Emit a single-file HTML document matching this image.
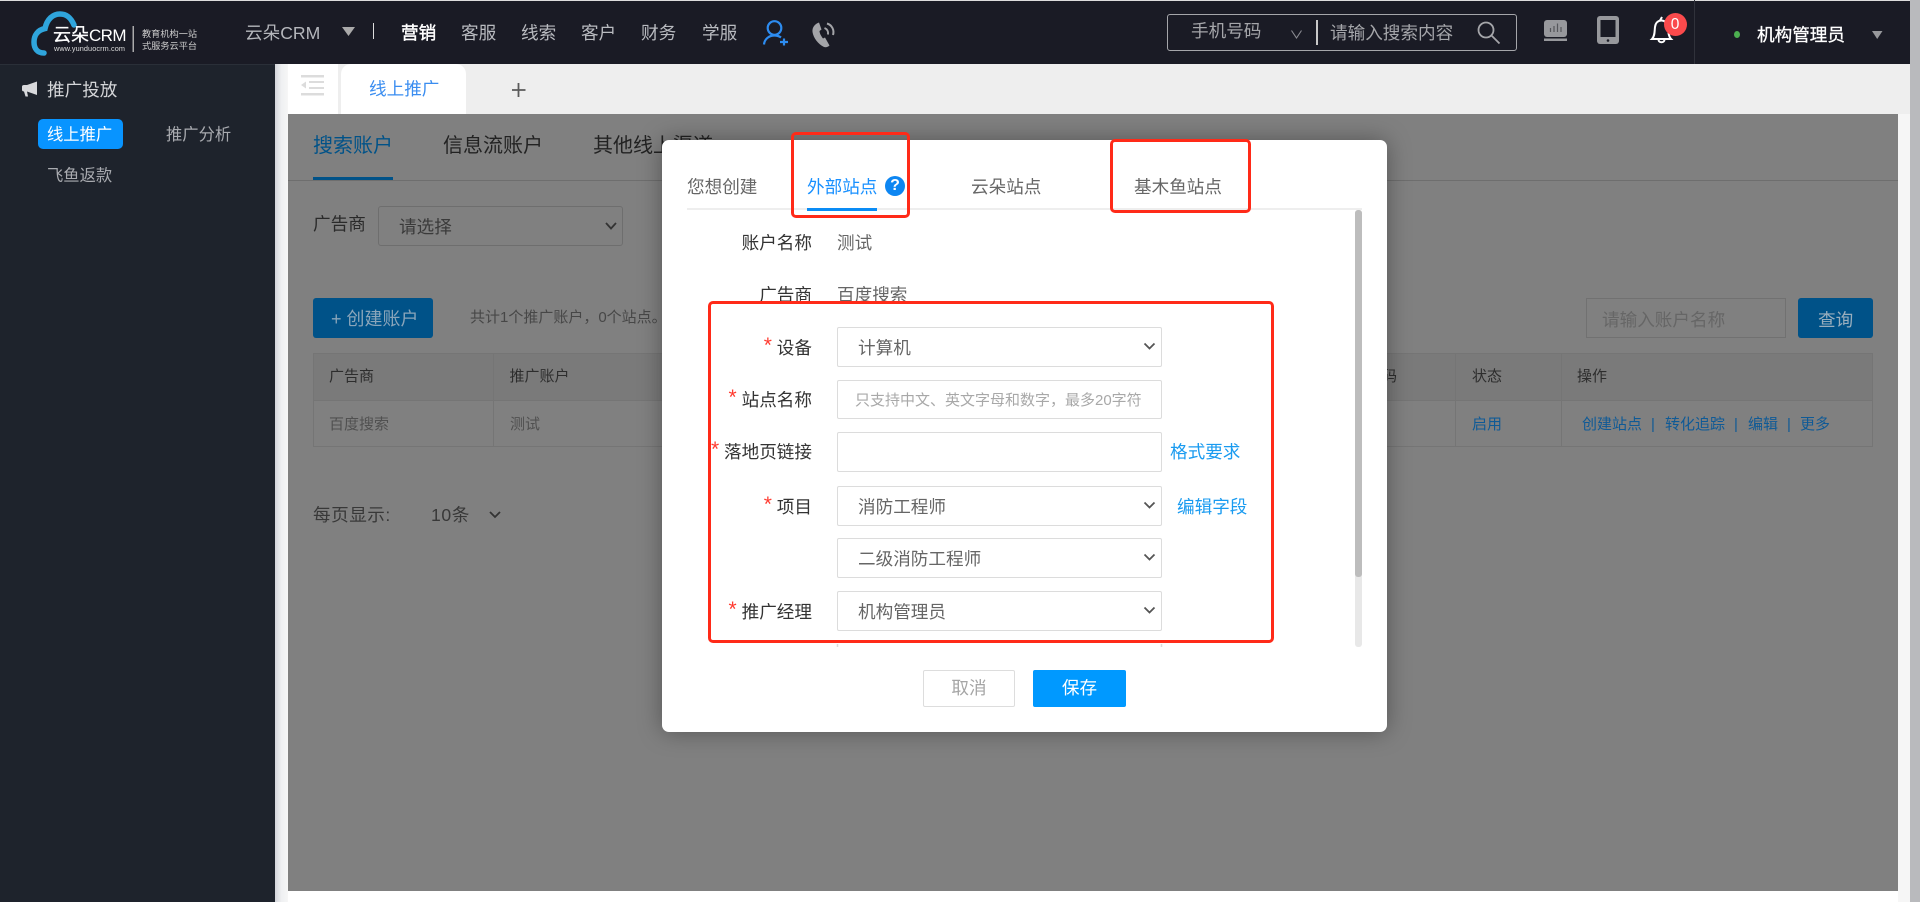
<!DOCTYPE html>
<html lang="zh-CN">
<head>
<meta charset="utf-8">
<title>云朵CRM 推广投放</title>
<style>
html,body{margin:0;padding:0;width:1920px;height:902px;overflow:hidden;background:#fff}
body{position:relative;font-family:"Liberation Sans","Noto Sans CJK SC",sans-serif}
.a{position:absolute;box-sizing:border-box}
.t{position:absolute;white-space:nowrap;line-height:24px;height:24px;font-size:17.6px}
.s{font-size:15px}
svg{position:absolute;overflow:visible}
.sel{position:absolute;box-sizing:border-box;left:837px;width:325px;border:1.5px solid #dcdcdc;border-radius:2px;background:#fff}
.star{color:#ff3b30;font-size:21px;position:relative;top:-2px;line-height:10px;vertical-align:baseline}
.lb{color:#333}
.sv{color:#666}
</style>
</head>
<body>
<!-- base -->
<div class="a" style="left:0;top:0;width:1910px;height:1.5px;background:#ddd"></div>
<div class="a" style="left:0;top:1px;width:1910px;height:63px;background:#1a1b25"></div>
<div class="a" style="left:1910px;top:0;width:10px;height:902px;background:#b9babd"></div>
<div class="a" style="left:0;top:64px;width:275px;height:838px;background:#1e232c;border-top:1px solid #2a2f38"></div>
<div class="a" style="left:275px;top:64px;width:13px;height:838px;background:linear-gradient(90deg,#d3d5da,#eff0f2 50%,#f6f6f6)"></div>
<div class="a" style="left:288px;top:64px;width:53px;height:50px;background:#fff"></div>
<div class="a" style="left:338px;top:64px;width:3px;height:50px;background:#eee"></div>
<div class="a" style="left:341px;top:64px;width:1569px;height:50px;background:#eee"></div>
<div class="a" style="left:1898px;top:114px;width:12px;height:788px;background:#f6f6f6"></div>
<div class="a" style="left:288px;top:114px;width:1610px;height:777px;background:#808080"></div>

<!-- logo -->
<svg style="left:0;top:0" width="240" height="64" viewBox="0 0 240 64">
<path d="M44 53 C37 53 34 48 34 42 C34 35 38 30 45 28.500 C47 19 53 14 60 14 C67 14 71 18 74 25" fill="none" stroke="#2fa5dc" stroke-width="5.500" stroke-linecap="round"/>
<rect x="132.500" y="26" width="1.500" height="26" fill="#aaa"/>
</svg>
<div class="t" style="left:53px;top:23px;color:#fff;font-size:18px;-webkit-text-stroke:.3px #fff">云朵<span style="font-size:17px;letter-spacing:-.6px;-webkit-text-stroke:0">CRM</span></div>
<div class="t" style="left:54px;top:37px;color:#ddd;font-size:7.300px;letter-spacing:.1px">www.yunduocrm.com</div>
<div class="t" style="left:142px;top:22px;color:#ccc;font-size:9.200px">教育机构一站</div>
<div class="t" style="left:142px;top:34px;color:#ccc;font-size:9.200px">式服务云平台</div>

<!-- top nav -->
<div class="t" style="left:245px;top:21px;color:#b5b7bc">云朵CRM</div>
<svg style="left:342px;top:27px" width="14" height="10"><path d="M0 0H13L6.500 9Z" fill="#aaa"/></svg>
<div class="a" style="left:373px;top:23px;width:1px;height:16px;background:#ddd"></div>
<div class="t" style="left:401px;top:21px;color:#fff;-webkit-text-stroke:.45px #fff">营销</div>
<div class="t" style="left:461px;top:21px;color:#b9bbc0">客服</div>
<div class="t" style="left:521px;top:21px;color:#b9bbc0">线索</div>
<div class="t" style="left:581px;top:21px;color:#b9bbc0">客户</div>
<div class="t" style="left:641px;top:21px;color:#b9bbc0">财务</div>
<div class="t" style="left:702px;top:21px;color:#b9bbc0">学服</div>
<svg style="left:763px;top:20px" width="26" height="26" viewBox="0 0 26 26" fill="none" stroke="#2d8cf0" stroke-width="2.200">
<circle cx="11.500" cy="8" r="6.800"/>
<path d="M1 24.500 C1.500 19 6 15.500 11.500 15.500 C14 15.500 16 16 18 17.500"/>
<path d="M17 22H25M21 18.500V25.500"/>
</svg>
<svg style="left:812px;top:21px" width="24" height="27" viewBox="0 0 24 27">
<path d="M7 1.500 C3 3 0 6 0.500 11 C1.500 17 6 23 12 26 C14 26.500 16 26 17.500 24.500 L13 16.500 L11 17.500 C9 15 7.500 12 7.500 10 L9.500 8.500 Z" fill="#a3a4a8"/>
<path d="M12.500 7 C15 8 16.500 10.500 16 13.500M15 2.500 C20 4 22.500 9 21 14" fill="none" stroke="#a3a4a8" stroke-width="2"/>
</svg>

<!-- search -->
<div class="a" style="left:1167px;top:14px;width:350px;height:37px;border:1px solid #a5a6aa;border-radius:3px"></div>
<div class="t" style="left:1191px;top:19px;color:#a5a6aa">手机号码</div>
<svg style="left:1291px;top:30px" width="12" height="9"><path d="M.5 .5L5.500 8L10.500 .5" fill="none" stroke="#8b8c92" stroke-width="1.100"/></svg>
<div class="a" style="left:1316px;top:20px;width:1.500px;height:25px;background:#c8c8c8"></div>
<div class="t" style="left:1330px;top:21px;color:#a5a6aa">请输入搜索内容</div>
<svg style="left:1477px;top:21px" width="24" height="23" fill="none" stroke="#a5a6aa" stroke-width="1.800"><circle cx="9" cy="9" r="7.500"/><path d="M14.500 14.500L22.500 22.500"/></svg>

<!-- right icons -->
<svg style="left:1544px;top:20px" width="24" height="22" viewBox="0 0 24 22">
<rect x="0" y="0" width="23" height="17" rx="3" fill="#97989c"/>
<path d="M6.500 8V12M10 6V12M13.500 3.500V12M17 7V12" stroke="#55565b" stroke-width="1.200"/>
<rect x="0" y="18.500" width="23" height="2.500" fill="#97989c"/>
</svg>
<svg style="left:1597px;top:16px" width="22" height="28" viewBox="0 0 22 28">
<rect width="22" height="28" rx="3" fill="#97989c"/>
<rect x="3.500" y="4" width="15" height="17" fill="#1a1b25"/>
<circle cx="11" cy="24.500" r="1.300" fill="#1a1b25"/>
</svg>
<svg style="left:1650px;top:17px" width="24" height="27" viewBox="0 0 24 27" fill="none" stroke="#fff" stroke-width="2">
<path d="M2 22 C5 19 4.500 14 5 10 C5.500 6 8 3.500 11.500 3.500 C15 3.500 17 6 18 10 C18.500 14 18 19 21 22 Z"/>
<path d="M8.500 23 C9 26 14 26 14.500 23"/>
<path d="M10 3.500L12 0"/>
</svg>
<div class="a" style="left:1663.500px;top:12.500px;width:23px;height:23px;border-radius:50%;background:#fa4a4c;color:#fff;font-size:15.500px;line-height:23px;text-align:center">0</div>
<div class="a" style="left:1693.500px;top:0;width:1px;height:64px;background:#30323b"></div>
<div class="a" style="left:1733.500px;top:31px;width:6px;height:7px;border-radius:50%;background:#4caf50"></div>
<div class="t" style="left:1757px;top:23px;color:#fff;-webkit-text-stroke:.3px #fff">机构管理员</div>
<svg style="left:1872px;top:31px" width="11" height="9"><path d="M0 0H10.500L5.200 8Z" fill="#97989c"/></svg>

<!-- sidebar -->
<svg style="left:21px;top:80px" width="18" height="18" viewBox="0 0 18 18">
<path d="M1 6.500 C1 5.500 2 5 3 5 H6 L16 1.500 V15 L6 11.500 L7 16.500 L4.500 16.500 L3 11.500 C2 11.500 1 11 1 10 Z" fill="#d8d9dc"/>
</svg>
<div class="t" style="left:47px;top:78px;color:#d5d6d9">推广投放</div>
<div class="a" style="left:38px;top:119px;width:85px;height:30px;border-radius:5px;background:#0894ff"></div>
<div class="t" style="left:47px;top:122.500px;color:#fff;font-size:16.300px">线上推广</div>
<div class="t" style="left:166px;top:123px;color:#a9abb0;font-size:16.300px">推广分析</div>
<div class="t" style="left:47px;top:164px;color:#a9abb0;font-size:16.300px">飞鱼返款</div>

<!-- tab strip -->
<svg style="left:301px;top:75px" width="24" height="22" viewBox="0 0 24 22" fill="#dcdcdc">
<rect x="0" y="0" width="23" height="2.500"/><rect x="8" y="6" width="15" height="2"/><rect x="8" y="12" width="15" height="2"/><rect x="0" y="18" width="23" height="2.500"/>
<path d="M0 10L5 6.500V13.500Z"/>
</svg>
<div class="a" style="left:341px;top:64px;width:125px;height:50px;background:#fff;border-radius:10px 10px 0 0"></div>
<div class="t" style="left:369px;top:77px;color:#3a8df0">线上推广</div>
<svg style="left:511px;top:82px" width="16" height="16"><path d="M7.500 1V15M1 8H14.500" stroke="#5a5a5a" stroke-width="1.800"/></svg>

<!-- page under overlay -->
<div class="t" style="left:313px;top:134px;color:#005288;font-size:20px">搜索账户</div>
<div class="t" style="left:443px;top:134px;color:#222;font-size:20px">信息流账户</div>
<div class="t" style="left:593px;top:134px;color:#222;font-size:20px">其他线上渠道</div>
<div class="a" style="left:288px;top:180px;width:1610px;height:1px;background:#6e6e6e"></div>
<div class="a" style="left:313px;top:177px;width:80px;height:3px;background:#005288"></div>

<div class="t" style="left:313px;top:212px;color:#2a2a2a">广告商</div>
<div class="a" style="left:378px;top:206px;width:245px;height:40px;border:1px solid #6e6e6e;border-radius:3px"></div>
<div class="t" style="left:399px;top:215px;color:#3a3a3a">请选择</div>
<svg style="left:605px;top:222px" width="12" height="8"><path d="M1 1L6 6.500L11 1" fill="none" stroke="#333" stroke-width="1.800"/></svg>

<div class="a" style="left:313px;top:298px;width:120px;height:40px;background:#005288;border-radius:3px"></div>
<div class="t" style="left:331px;top:307px;color:#8aa5ba;font-size:18px">+ 创建账户</div>
<div class="t s" style="left:470px;top:306px;color:#474747">共计1个推广账户，0个站点。</div>

<div class="a" style="left:1586px;top:298px;width:200px;height:40px;border:1px solid #717171"></div>
<div class="t" style="left:1602px;top:308px;color:#666">请输入账户名称</div>
<div class="a" style="left:1798px;top:298px;width:75px;height:40px;background:#005288;border-radius:3px"></div>
<div class="t" style="left:1818px;top:308px;color:#99aebd">查询</div>

<div class="a" style="left:313px;top:353px;width:1560px;height:47px;background:#7a7a7a"></div>
<div class="a" style="left:313px;top:353px;width:1560px;height:94px;border:1px solid #757575"></div>
<div class="a" style="left:313px;top:400px;width:1560px;height:1px;background:#757575"></div>
<div class="a" style="left:493px;top:353px;width:1px;height:94px;background:#757575"></div>
<div class="a" style="left:1455px;top:353px;width:1px;height:94px;background:#757575"></div>
<div class="a" style="left:1561px;top:353px;width:1px;height:94px;background:#757575"></div>
<div class="t s" style="left:329px;top:365px;color:#2d2d2d">广告商</div>
<div class="t s" style="left:509.500px;top:365px;color:#2d2d2d">推广账户</div>
<div class="t s" style="left:1382px;top:365px;color:#2d2d2d">码</div>
<div class="t s" style="left:1472px;top:365px;color:#2d2d2d">状态</div>
<div class="t s" style="left:1577px;top:365px;color:#2d2d2d">操作</div>
<div class="t s" style="left:329px;top:412.500px;color:#505050">百度搜索</div>
<div class="t s" style="left:510px;top:412.500px;color:#505050">测试</div>
<div class="t s" style="left:1472px;top:412.500px;color:#0f5a96">启用</div>
<div class="t s" style="left:1582px;top:412.500px;color:#0f5a96">创建站点</div>
<div class="t s" style="left:1651px;top:412.500px;color:#0f5a96">|</div>
<div class="t s" style="left:1665px;top:412.500px;color:#0f5a96">转化追踪</div>
<div class="t s" style="left:1734px;top:412.500px;color:#0f5a96">|</div>
<div class="t s" style="left:1748px;top:412.500px;color:#0f5a96">编辑</div>
<div class="t s" style="left:1787px;top:412.500px;color:#0f5a96">|</div>
<div class="t s" style="left:1800px;top:412.500px;color:#0f5a96">更多</div>

<div class="t" style="left:313px;top:503px;color:#383838;letter-spacing:.5px">每页显示:</div>
<div class="t" style="left:431px;top:503px;color:#383838;letter-spacing:.6px">10条</div>
<svg style="left:489px;top:511px" width="12" height="8"><path d="M1 1L6 6L11 1" fill="none" stroke="#333" stroke-width="1.800"/></svg>

<!-- modal -->
<div class="a" style="left:662px;top:140px;width:725px;height:592px;background:#fff;border-radius:7px;box-shadow:0 0 24px rgba(0,0,0,.35)"></div>
<div class="t" style="left:687px;top:175px;color:#666">您想创建</div>
<div class="t" style="left:807px;top:175px;color:#1890ff">外部站点</div>
<div class="a" style="left:885px;top:176px;width:20px;height:20px;border-radius:50%;background:#0d86f2;color:#fff;font-size:16px;font-weight:700;line-height:20px;text-align:center">?</div>
<div class="t" style="left:971px;top:175px;color:#666">云朵站点</div>
<div class="t" style="left:1134px;top:175px;color:#666">基木鱼站点</div>
<div class="a" style="left:687px;top:208px;width:675px;height:2px;background:#eee"></div>
<div class="a" style="left:807px;top:207.500px;width:70px;height:3px;background:#0a8cf5"></div>

<div class="a" style="left:1355px;top:210px;width:7px;height:437px;background:#e8e8e8;border-radius:3px"></div>
<div class="a" style="left:1355px;top:210px;width:7px;height:367px;background:#bdbdbd;border-radius:3px"></div>

<div class="t lb" style="right:1108px;top:231px">账户名称</div>
<div class="t sv" style="left:837px;top:231px">测试</div>
<div class="t lb" style="right:1108px;top:283px">广告商</div>
<div class="t sv" style="left:837px;top:283px">百度搜索</div>

<!-- red box with field group -->
<div class="a" style="left:708px;top:301px;width:566px;height:342px;background:#fff;border:3.500px solid #ff2a18;border-radius:5px"></div>

<div class="t lb" style="right:1108px;top:336px"><span class="star">*</span> 设备</div>
<div class="sel" style="top:327px;height:40px"></div>
<div class="t sv" style="left:858px;top:336px">计算机</div>

<div class="t lb" style="right:1108px;top:388px"><span class="star">*</span> 站点名称</div>
<div class="sel" style="top:380px;height:39px"></div>
<div class="t s" style="left:855px;top:389px;color:#a8a8a8">只支持中文、英文字母和数字，最多20字符</div>

<div class="t lb" style="right:1108px;top:440px"><span class="star">*</span> 落地页链接</div>
<div class="sel" style="top:432px;height:40px"></div>
<div class="t" style="left:1170px;top:440px;color:#1a9bf0">格式要求</div>

<div class="t lb" style="right:1108px;top:495px"><span class="star">*</span> 项目</div>
<div class="sel" style="top:486px;height:40px"></div>
<div class="t sv" style="left:858px;top:495px">消防工程师</div>
<div class="t" style="left:1177px;top:495px;color:#1a9bf0">编辑字段</div>

<div class="sel" style="top:538px;height:40px"></div>
<div class="t sv" style="left:858px;top:547px">二级消防工程师</div>

<div class="t lb" style="right:1108px;top:600px"><span class="star">*</span> 推广经理</div>
<div class="sel" style="top:591px;height:40px"></div>
<div class="t sv" style="left:858px;top:600px">机构管理员</div>

<svg style="left:0;top:0" width="1920" height="902">
<g fill="none" stroke="#555" stroke-width="1.800">
<path d="M1144.500 343.500L1149.500 348.500L1154.500 343.500"/>
<path d="M1144.500 502.500L1149.500 507.500L1154.500 502.500"/>
<path d="M1144.500 554.500L1149.500 559.500L1154.500 554.500"/>
<path d="M1144.500 607.500L1149.500 612.500L1154.500 607.500"/>
</g>
<path d="M837.500 644V647M1161.500 644V647" stroke="#dcdcdc" stroke-width="1.500"/>
</svg>

<!-- footer buttons -->
<div class="a" style="left:923px;top:670px;width:92px;height:37px;border:1.500px solid #ddd;border-radius:2px;color:#a5a5a5;font-size:17.600px;line-height:34px;text-align:center">取消</div>
<div class="a" style="left:1033px;top:670px;width:93px;height:37px;background:#0099ff;border-radius:2px;color:#fff;font-size:17.600px;line-height:37px;text-align:center">保存</div>

<!-- annotation boxes -->
<div class="a" style="left:791px;top:132px;width:119px;height:86px;border:3.500px solid #ff2a18;border-radius:5px"></div>
<div class="a" style="left:1110px;top:139px;width:141px;height:74px;border:3.500px solid #ff2a18;border-radius:5px"></div>
</body>
</html>
